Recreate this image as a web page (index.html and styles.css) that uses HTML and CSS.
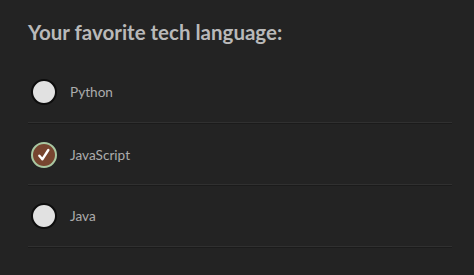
FILE: index.html
```html
<!DOCTYPE html>
<html lang="en">
<head>
<meta charset="utf-8">
<title>Favorite tech language</title>
<link rel="stylesheet" href="styles.css">
</head>
<body>
<form class="poll">
  <h2 class="poll-title">Your favorite tech language:</h2>
  <ul class="options">
    <li class="option">
      <span class="radio"></span>
      <span class="label">Python</span>
    </li>
    <li class="option option-checked">
      <span class="radio radio-checked">
        <svg viewBox="0 0 24 24" width="16" height="16" aria-hidden="true"><path d="M5 13 L9.5 18.5 L18.5 4.5" fill="none" stroke="#fff" stroke-width="3.6" stroke-linecap="round" stroke-linejoin="round"/></svg>
      </span>
      <span class="label">JavaScript</span>
    </li>
    <li class="option">
      <span class="radio"></span>
      <span class="label">Java</span>
    </li>
  </ul>
</form>
</body>
</html>
```
FILE: styles.css
```css
html, body {
  margin: 0;
  padding: 0;
  background: #232323;
  height: 100%;
}
body {
  font-family: Lato, "Open Sans", sans-serif;
}
.poll {
  padding: 20px 22px 0 28px;
}
.poll-title {
  margin: 0 0 17px 0;
  font-size: 20.5px;
  line-height: 24px;
  font-weight: 700;
  color: #b9b9b9;
}
.options {
  list-style: none;
  margin: 0;
  padding: 0;
}
.option {
  display: flex;
  align-items: center;
  gap: 13px;
  height: 61px;
  padding-left: 3px;
  border-bottom: 1px solid #303030;
  box-shadow: 0 1px 0 #1b1b1b;
}
.option-checked {
  padding-top: 3px;
  height: 58px;
}
.radio {
  box-sizing: border-box;
  width: 26px;
  height: 26px;
  border-radius: 50%;
  background: #e1e1e1;
  border: 2px solid #0d0d0d;
  display: flex;
  align-items: center;
  justify-content: center;
}
.radio-checked {
  background: #774530;
  border: 2px solid #a9c7a1;
}
.label {
  font-size: 13.6px;
  color: #acacac;
}
```
